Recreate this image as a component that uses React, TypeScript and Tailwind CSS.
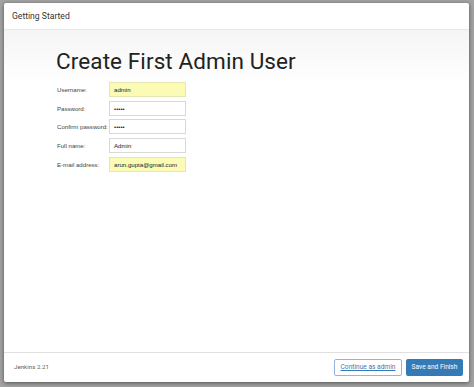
import React from "react";

const rows = [
  { label: "Username:", value: "admin", filled: true },
  { label: "Password:", value: "•••••", filled: false },
  { label: "Confirm password:", value: "•••••", filled: false },
  { label: "Full name:", value: "Admin", filled: false },
  { label: "E-mail address:", value: "arun.gupta@gmail.com", filled: true },
];

export default function App() {
  return (
    <div className="w-[474px] h-[387px] bg-[#a3a3a3] pt-[3px] pl-[4px] font-['Liberation_Sans',Arial,sans-serif]">
      <div className="w-[465px] h-[379px] bg-white rounded-[2px] shadow-[0_1px_4px_rgba(0,0,0,0.5)] flex flex-col overflow-hidden">
        <div className="h-[27px] shrink-0 border-b border-[#e8e8e8] flex items-center pl-[8px] text-[8.6px] text-[#333] font-['Roboto',sans-serif]">
          Getting Started
        </div>
        <div className="flex-1 bg-gradient-to-b from-[#f5f5f5] to-white to-[55px] pl-[52px] pt-[18px]">
          <h1 className="font-['Roboto',sans-serif] text-[22.5px] leading-[26px] text-[#222] tracking-[0.1px]">
            Create First Admin User
          </h1>
          <div className="mt-[8px] flex flex-col gap-[3.7px]">
            {rows.map((r) => (
              <div key={r.label} className="flex items-center h-[15px]">
                <div className="w-[53px] pl-[1px] text-[6.1px] text-[#444] whitespace-nowrap">{r.label}</div>
                <div
                  className={
                    "w-[77px] h-[15px] border flex items-center pl-[4px] text-[6.1px] text-[#222] whitespace-nowrap overflow-hidden " +
                    (r.filled ? "bg-[#fbfbb5] border-[#e6e6b0]" : "bg-white border-[#d8d8d8]")
                  }
                >
                  {r.value}
                </div>
              </div>
            ))}
          </div>
        </div>
        <div className="h-[30px] shrink-0 border-t border-[#e0e0e0] flex items-center justify-between pl-[10px] pr-[6px]">
          <span className="text-[6.2px] text-[#666] font-['Roboto',sans-serif]">Jenkins 2.21</span>
          <div className="flex gap-[4px]">
            <button className="w-[68px] h-[17px] border border-[#8fb6de] rounded-[2px] bg-white text-[6.6px] text-[#337ab7] underline font-['Roboto',sans-serif]">
              Continue as admin
            </button>
            <button className="w-[57px] h-[17px] rounded-[2px] bg-[#337ab7] text-[6.6px] text-white font-['Roboto',sans-serif]">
              Save and Finish
            </button>
          </div>
        </div>
      </div>
    </div>
  );
}
